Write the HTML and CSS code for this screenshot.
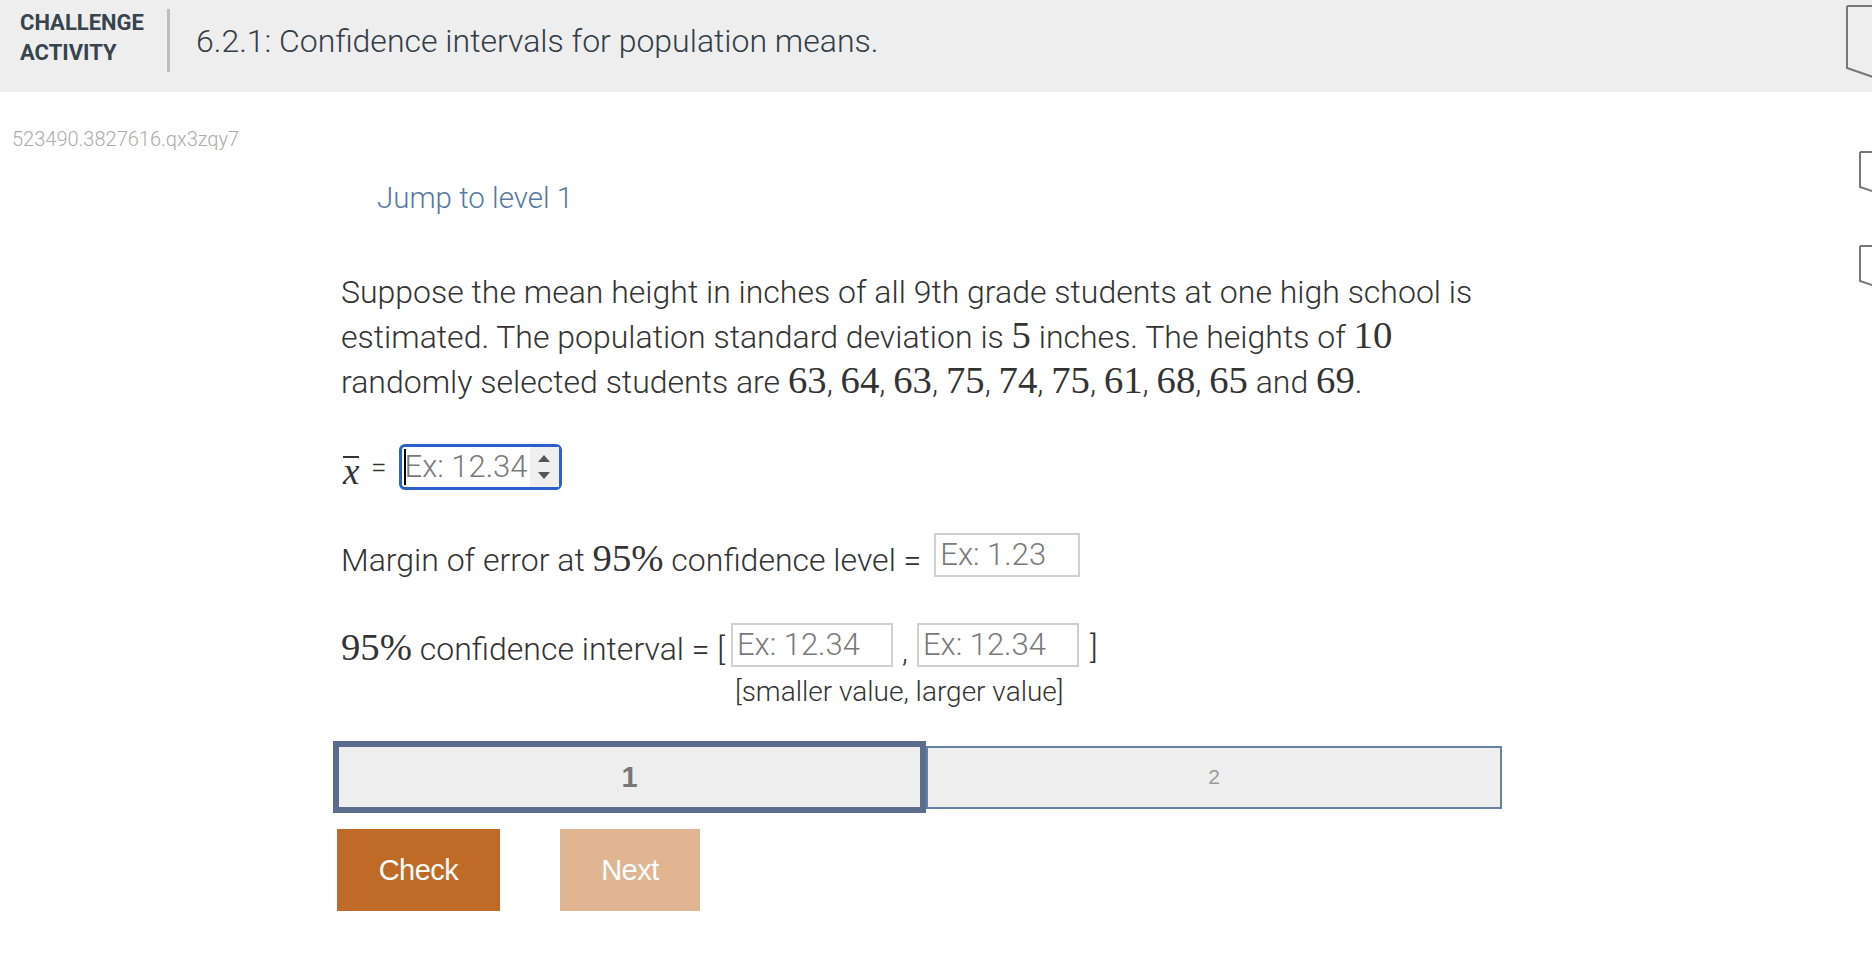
FILE: index.html
```html
<!DOCTYPE html>
<html lang="en">
<head>
<meta charset="utf-8">
<title>6.2.1: Confidence intervals for population means.</title>
<link rel="stylesheet" href="styles.css">
</head>
<body>
<header class="hdr">
  <div class="hdr-label">CHALLENGE<br>ACTIVITY</div>
  <div class="hdr-sep"></div>
  <h1 class="hdr-title">6.2.1: Confidence intervals for population means.</h1>
  <div class="hdr-icon">
    <svg width="26" height="74" viewBox="0 0 26 74"><path d="M1 1 H30 M1 1 V63 L27 72" fill="none" stroke="#777" stroke-width="2"/></svg>
  </div>
</header>
<div class="page">
  <div class="main">
    <div class="act-id">523490.3827616.qx3zqy7</div>
    <div class="qa">
      <a class="jump">Jump to level 1</a>
      <p class="question">Suppose the mean height in inches of all 9th grade students at one high school is<br>estimated. The population standard deviation is <span class="m">5</span> inches. The heights of <span class="m">10</span><br>randomly selected students are <span class="m">63</span>, <span class="m">64</span>, <span class="m">63</span>, <span class="m">75</span>, <span class="m">74</span>, <span class="m">75</span>, <span class="m">61</span>, <span class="m">68</span>, <span class="m">65</span> and <span class="m">69</span>.</p>

      <div class="row row-mean">
        <span class="xbar">x</span>
        <span class="eq">=</span>
        <div class="inp inp-focus">
          <span class="caret"></span>
          <span class="ph">Ex: 12.34</span>
          <span class="spin">
            <svg width="16" height="34" viewBox="0 0 16 34"><path d="M2 12 L8 5 L14 12 Z M2 22 L14 22 L8 29 Z" fill="#555"/></svg>
          </span>
        </div>
      </div>

      <div class="row row-margin">
        <span class="lbl">Margin of error at <span class="m">95%</span> confidence level =</span>
        <div class="inp inp-plain inp-margin"><span class="ph">Ex: 1.23</span></div>
      </div>

      <div class="row row-int">
        <span class="lbl lbl-int"><span class="m">95%</span> confidence interval = [</span>
        <div class="int-group">
          <div class="int-inputs">
            <div class="inp inp-plain inp-int"><span class="ph">Ex: 12.34</span></div>
            <span class="comma">,</span>
            <div class="inp inp-plain inp-int"><span class="ph">Ex: 12.34</span></div>
            <span class="close">]</span>
          </div>
          <div class="hint">[smaller value, larger value]</div>
        </div>
      </div>

      <div class="levels">
        <div class="level level-on">1</div>
        <div class="level level-off">2</div>
      </div>

      <div class="btns">
        <button class="btn btn-check">Check</button>
        <button class="btn btn-next">Next</button>
      </div>
    </div>
  </div>
  <div class="rail">
    <svg class="rail-icon" width="13" height="42" viewBox="0 0 13 42"><path d="M1 1 H20 M1 1 V36 L16 41" fill="none" stroke="#777" stroke-width="2"/></svg>
    <svg class="rail-icon" width="13" height="42" viewBox="0 0 13 42"><path d="M1 1 H20 M1 1 V36 L16 41" fill="none" stroke="#777" stroke-width="2"/></svg>
  </div>
</div>
</body>
</html>
```
FILE: styles.css
```css
html, body {
  margin: 0;
  padding: 0;
  background: #fff;
}
body {
  font-family: Roboto, "Liberation Sans", Arial, sans-serif;
  color: #333;
  overflow: hidden;
}

/* header */
.hdr {
  display: flex;
  align-items: flex-start;
  height: 92px;
  background: #eeeeee;
  overflow: hidden;
}
.hdr-label {
  margin: 8px 0 0 20px;
  font-weight: 700;
  font-size: 22px;
  line-height: 30px;
  color: #37434d;
}
.hdr-sep {
  width: 3px;
  height: 63px;
  margin: 9px 0 0 23px;
  background: #bdbdbd;
}
.hdr-title {
  margin: 23px 0 0 26px;
  font-size: 32px;
  line-height: 36px;
  font-weight: 300;
  color: #333d46;
}
.hdr-icon {
  margin-left: auto;
  margin-top: 5px;
  width: 26px;
  height: 74px;
}
.hdr-icon svg { display: block; }

/* page */
.page {
  display: flex;
}
.main {
  flex: 1;
}
.rail {
  width: 13px;
  display: flex;
  flex-direction: column;
  padding-top: 59px;
  gap: 52px;
  overflow: hidden;
}
.rail-icon { display: block; }

.act-id {
  margin: 35px 0 0 12px;
  font-size: 20px;
  line-height: 24px;
  color: #ababab;
  font-weight: 300;
}

.qa {
  margin-left: 333px;
  width: 1169px;
}
.jump {
  display: block;
  margin: 30px 0 0 44px;
  font-size: 29.5px;
  line-height: 34px;
  color: #5878a3;
  font-weight: 300;
}
.question {
  margin: 55px 0 0 8px;
  font-size: 32px;
  line-height: 45px;
  font-weight: 300;
  color: #333;
}
.m {
  font-family: "Liberation Serif", "Times New Roman", serif;
  font-size: 1.21em;
  line-height: 1;
  color: #333;
}

.row {
  display: flex;
  align-items: center;
  margin-left: 8px;
  font-size: 32px;
  font-weight: 300;
  color: #333;
}
.row-mean {
  margin-top: 39px;
  height: 46px;
}
.xbar {
  font-family: "Liberation Serif", "Times New Roman", serif;
  font-style: italic;
  font-size: 37px;
  line-height: 28px;
  border-top: 2px solid #333;
  margin-top: 8px;
  margin-left: 2px;
  width: 16px;
  display: inline-block;
}
.eq {
  margin-left: 12px;
  font-size: 28px;
}
.inp {
  box-sizing: border-box;
  display: flex;
  align-items: center;
  background: #fff;
}
.inp-focus {
  margin-left: 12px;
  width: 163px;
  height: 46px;
  border: 3px solid #2b5fcb;
  border-radius: 6px;
}
.caret {
  width: 2px;
  height: 36px;
  background: #000;
  margin-left: 2px;
}
.ph {
  font-size: 31px;
  font-weight: 300;
  color: #7a7a7a;
  line-height: 36px;
  white-space: nowrap;
}
.inp-focus .ph {
  margin-left: -1px;
}
.spin {
  margin-left: auto;
  width: 29px;
  height: 40px;
  background: #efefef;
  display: flex;
  align-items: center;
  justify-content: center;
}
.spin svg { display: block; }

.row-margin {
  margin-top: 43px;
  height: 44px;
}
.lbl {
  white-space: nowrap;
  position: relative;
  top: 4px;
}
.inp-plain {
  height: 44px;
  border: 2px solid #d0d0d0;
}
.inp-plain .ph {
  margin-left: 4px;
}
.inp-margin {
  width: 146px;
  margin-left: 13px;
}

.row-int {
  margin-top: 46px;
  align-items: flex-start;
}
.lbl-int {
  line-height: 44px;
  top: 4px;
}
.int-group {
  display: flex;
  flex-direction: column;
  margin-left: 6px;
}
.int-inputs {
  display: flex;
  align-items: flex-start;
  height: 44px;
}
.inp-int {
  width: 162px;
}
.comma {
  width: 24px;
  text-align: center;
  font-size: 30px;
  line-height: 30px;
  margin-top: 14px;
}
.close {
  margin-left: 11px;
  font-size: 32px;
  line-height: 44px;
  position: relative;
  top: 2px;
}
.hint {
  margin-top: 9px;
  padding-left: 4px;
  font-size: 28px;
  line-height: 32px;
  font-weight: 300;
  color: #333;
}

.levels {
  display: flex;
  align-items: center;
  margin-top: 33px;
  height: 72px;
}
.level {
  box-sizing: border-box;
  background: #eeeeee;
  display: flex;
  align-items: center;
  justify-content: center;
  font-family: "Liberation Sans", Arial, sans-serif;
}
.level-on {
  width: 593px;
  height: 72px;
  border: 6px solid #5b6d8d;
  font-weight: 700;
  font-size: 29px;
  color: #777;
}
.level-off {
  width: 576px;
  height: 63px;
  border: 2px solid #6582a5;
  font-size: 21px;
  color: #9a9a9a;
}

.btns {
  display: flex;
  margin-top: 16px;
}
.btn {
  border: 0;
  height: 82px;
  font-family: "Liberation Sans", Arial, sans-serif;
  font-size: 29px;
  color: #fff;
  padding: 0;
  letter-spacing: -0.5px;
}
.btn-check {
  margin-left: 4px;
  width: 163px;
  background: #c06a27;
}
.btn-next {
  margin-left: 60px;
  width: 140px;
  background: #e0b592;
}
```
